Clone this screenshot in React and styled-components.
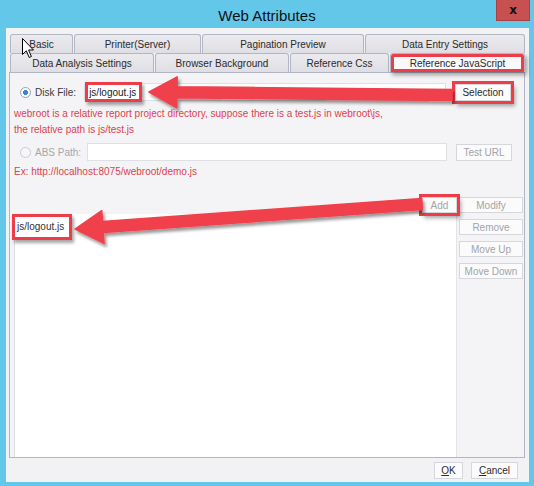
import React from "react";
import styled, { createGlobalStyle } from "styled-components";

const Global = createGlobalStyle`
  html, body { margin: 0; padding: 0; }
  body { background: #63c7ea; font-family: "Liberation Sans", Arial, sans-serif; }
  * { box-sizing: border-box; }
`;

const RED = "#ee3d48";

const Window = styled.div`
  position: relative;
  width: 534px;
  height: 486px;
  background: #63c7ea;
  display: flex;
  flex-direction: column;
  padding: 0 5px 4px 6px;
  overflow: hidden;
`;

const TitleBar = styled.div`
  height: 28px;
  margin: 0 -5px 0 -6px;
  display: grid;
  grid-template-columns: 1fr auto 1fr;
  align-items: center;
`;

const Title = styled.div`
  grid-column: 2;
  font-family: "Liberation Sans", Arial, sans-serif;
  font-size: 15px;
  color: #111;
  padding-top: 2px;
`;

const Close = styled.div`
  grid-column: 3;
  justify-self: end;
  align-self: start;
  width: 34px;
  height: 21px;
  margin-right: 4px;
  background: #c75050;
  border: 1px solid #a94040;
  border-top: none;
  display: flex;
  align-items: center;
  justify-content: center;
  font-family: "DejaVu Sans", sans-serif;
  font-weight: bold;
  font-size: 12px;
  color: #111;
`;

const Content = styled.div`
  flex: 1;
  background: #f2f2f4;
  display: flex;
  flex-direction: column;
  padding: 6px 4px 0 3px;
  font-size: 10px;
  color: #3a3a3a;
`;

const TabRow = styled.div`
  display: flex;
  gap: 1px;
  height: 19px;
  margin-left: 1px;
`;

const Tab = styled.div`
  flex: ${(p) => (p.$w ? `0 0 ${p.$w}px` : "1")};
  border: 1px solid #b2b6c4;
  border-bottom: none;
  border-radius: 3px 3px 0 0;
  background: ${(p) => (p.$active ? "#f9f9fb" : "linear-gradient(#ebebef, #dedee4)")};
  display: flex;
  align-items: center;
  justify-content: center;
  font-size: 10px;
  color: #2a2a2a;
  white-space: nowrap;
  position: relative;
  z-index: ${(p) => (p.$highlight ? 2 : 0)};
  box-shadow: ${(p) =>
    p.$highlight ? `inset 0 0 0 3px ${RED}, 2px 3px 4px rgba(0,0,0,0.35)` : "none"};
`;

const Panel = styled.div`
  flex: 1;
  border: 1px solid #b2b6c4;
  background: #f4f4f6;
  display: flex;
  flex-direction: column;
  padding: 10px 0 0 4px;
`;

const FieldRow = styled.div`
  display: flex;
  align-items: center;
  height: 18px;
  margin-left: 6px;
  margin-top: ${(p) => p.$mt || 0}px;
  padding-right: ${(p) => p.$pr}px;
`;

const Radio = styled.span`
  width: 11px;
  height: 11px;
  border-radius: 50%;
  flex: none;
  border: 1px solid ${(p) => (p.$disabled ? "#c9cbd2" : "#9aa0ae")};
  background: ${(p) =>
    p.$checked
      ? "radial-gradient(circle, #3d7fd6 0 2.2px, #fff 2.8px)"
      : p.$disabled
      ? "#f6f6f8"
      : "#fff"};
`;

const Label = styled.span`
  margin-left: 4px;
  margin-right: ${(p) => p.$gap}px;
  color: ${(p) => (p.$disabled ? "#a6a6aa" : "#3a3a3a")};
  white-space: nowrap;
`;

const TextField = styled.div`
  flex: 1;
  height: 18px;
  background: #fff;
  border: 1px solid #dfe0e4;
  display: flex;
  align-items: center;
  color: #222;
`;

const HighlightValue = styled.span`
  display: flex;
  align-items: center;
  height: calc(100% + 4px);
  margin: -2px 0 -2px 0;
  padding: 0 3px 0 1px;
  border: 3px solid ${RED};
  box-shadow: 2px 3px 3px rgba(0, 0, 0, 0.35);
  color: #222;
  background: #fff;
  position: relative;
  z-index: 2;
`;

const Button = styled.div`
  flex: none;
  width: ${(p) => p.$w}px;
  height: ${(p) => p.$h || 17}px;
  margin-left: ${(p) => p.$ml || 0}px;
  background: #fbfbfb;
  border: 1px solid #d6d7dc;
  display: flex;
  align-items: center;
  justify-content: center;
  font-size: 10px;
  color: ${(p) => (p.$disabled ? "#a3a3a8" : "#2b2b2b")};
  white-space: nowrap;
  position: relative;
  z-index: ${(p) => (p.$highlight ? 2 : 0)};
  box-shadow: ${(p) =>
    p.$highlight ? `0 0 0 3px ${RED}, 3px 4px 4px 1px rgba(0,0,0,0.35)` : "none"};
`;

const Note = styled.div`
  margin-top: ${(p) => p.$mt}px;
  line-height: 16px;
  color: #e0404e;
`;

const ListSection = styled.div`
  flex: 1;
  margin-top: 17px;
  display: flex;
  min-height: 0;
`;

const ListColumn = styled.div`
  flex: 1;
  display: flex;
  flex-direction: column;
`;

const ListBar = styled.div`
  height: 17px;
  display: flex;
  justify-content: flex-end;
  align-items: flex-start;
`;

const List = styled.div`
  flex: 1;
  background: #fff;
  border-left: 1px solid #dcdde2;
  border-right: 1px solid #e4e4e8;
`;

const ListItem = styled.div`
  width: fit-content;
  margin-left: -3px;
  padding: 2px 5px 2px 2px;
  line-height: 16px;
  color: #333;
  border: ${(p) => (p.$highlight ? `3px solid ${RED}` : "3px solid transparent")};
  box-shadow: ${(p) => (p.$highlight ? "2px 3px 3px rgba(0,0,0,0.35)" : "none")};
`;

const ButtonColumn = styled.div`
  width: 67px;
  display: flex;
  flex-direction: column;
  gap: 6px;
  padding-left: 2px;
`;

const Footer = styled.div`
  height: 24px;
  display: flex;
  justify-content: flex-end;
  align-items: flex-start;
  padding: 4px 7px 0 0;
  gap: 8px;
`;

const Mnemonic = styled.span`
  text-decoration: underline;
`;

const Overlay = styled.svg`
  position: absolute;
  left: 0;
  top: 0;
  pointer-events: none;
  z-index: 5;
`;

function arrowPoints(x1, y1, x2, y2, sw, hl, hw) {
  const dx = x2 - x1;
  const dy = y2 - y1;
  const len = Math.hypot(dx, dy);
  const ux = dx / len;
  const uy = dy / len;
  const nx = -uy;
  const ny = ux;
  const bx = x2 - ux * hl;
  const by = y2 - uy * hl;
  const pts = [
    [x1 + (nx * sw) / 2, y1 + (ny * sw) / 2],
    [bx + (nx * sw) / 2, by + (ny * sw) / 2],
    [bx + (nx * hw) / 2, by + (ny * hw) / 2],
    [x2, y2],
    [bx - (nx * hw) / 2, by - (ny * hw) / 2],
    [bx - (nx * sw) / 2, by - (ny * sw) / 2],
    [x1 - (nx * sw) / 2, y1 - (ny * sw) / 2],
  ];
  return pts.map((p) => p.map((v) => v.toFixed(1)).join(",")).join(" ");
}

const arrows = [
  { x1: 452, y1: 95, x2: 149, y2: 92, sw: 11, hl: 28, hw: 31 },
  { x1: 422, y1: 204, x2: 75, y2: 229, sw: 11, hl: 28, hw: 33 },
];

export default function App() {
  return (
    <>
      <Global />
      <Window>
        <TitleBar>
          <Title>Web Attributes</Title>
          <Close>x</Close>
        </TitleBar>
        <Content>
          <TabRow>
            <Tab $w={63}>Basic</Tab>
            <Tab $w={127}>Printer(Server)</Tab>
            <Tab $w={162}>Pagination Preview</Tab>
            <Tab>Data Entry Settings</Tab>
          </TabRow>
          <TabRow>
            <Tab $w={144}>Data Analysis Settings</Tab>
            <Tab $w={134}>Browser Background</Tab>
            <Tab $w={99}>Reference Css</Tab>
            <Tab $active $highlight>
              Reference JavaScript
            </Tab>
          </TabRow>
          <Panel>
            <FieldRow $pr={13}>
              <Radio $checked />
              <Label $gap={8}>Disk File:</Label>
              <TextField>
                <HighlightValue>js/logout.js</HighlightValue>
              </TextField>
              <Button $w={56} $ml={9} $highlight>
                Selection
              </Button>
            </FieldRow>
            <Note $mt={5}>
              webroot is a relative report project directory, suppose there is a test.js in webroot\js,
              <br />
              the relative path is js/test.js
            </Note>
            <FieldRow $mt={5} $pr={12}>
              <Radio $disabled />
              <Label $gap={6} $disabled>
                ABS Path:
              </Label>
              <TextField />
              <Button $w={56} $ml={9} $disabled>
                Test URL
              </Button>
            </FieldRow>
            <Note $mt={3}>Ex: http://localhost:8075/webroot/demo.js</Note>
            <ListSection>
              <ListColumn>
                <ListBar>
                  <Button $w={35} $h={16} $disabled $highlight>
                    Add
                  </Button>
                </ListBar>
                <List>
                  <ListItem $highlight>js/logout.js</ListItem>
                </List>
              </ListColumn>
              <ButtonColumn>
                <Button $w={64} $h={16} $disabled>
                  Modify
                </Button>
                <Button $w={64} $h={16} $disabled>
                  Remove
                </Button>
                <Button $w={64} $h={16} $disabled>
                  Move Up
                </Button>
                <Button $w={64} $h={16} $disabled>
                  Move Down
                </Button>
              </ButtonColumn>
            </ListSection>
          </Panel>
          <Footer>
            <Button $w={29}>
              <Mnemonic>O</Mnemonic>K
            </Button>
            <Button $w={47}>
              <Mnemonic>C</Mnemonic>ancel
            </Button>
          </Footer>
        </Content>
        <Overlay width="534" height="486" viewBox="0 0 534 486">
          <defs>
            <filter id="shadow" x="-10%" y="-30%" width="120%" height="160%">
              <feDropShadow dx="2" dy="3" stdDeviation="1.8" floodColor="#000" floodOpacity="0.4" />
            </filter>
          </defs>
          {arrows.map((a, i) => (
            <polygon
              key={i}
              points={arrowPoints(a.x1, a.y1, a.x2, a.y2, a.sw, a.hl, a.hw)}
              fill="#f0414b"
              stroke="#f0414b"
              strokeWidth="1.5"
              strokeLinejoin="round"
              filter="url(#shadow)"
            />
          ))}
          <path
            d="M22.5 38.5 L22.5 54.5 L26.3 50.8 L29.2 57.5 L31.4 56.5 L28.6 50 L33.5 50 Z"
            fill="#fff"
            stroke="#000"
            strokeWidth="1"
            strokeLinejoin="round"
          />
        </Overlay>
      </Window>
    </>
  );
}
